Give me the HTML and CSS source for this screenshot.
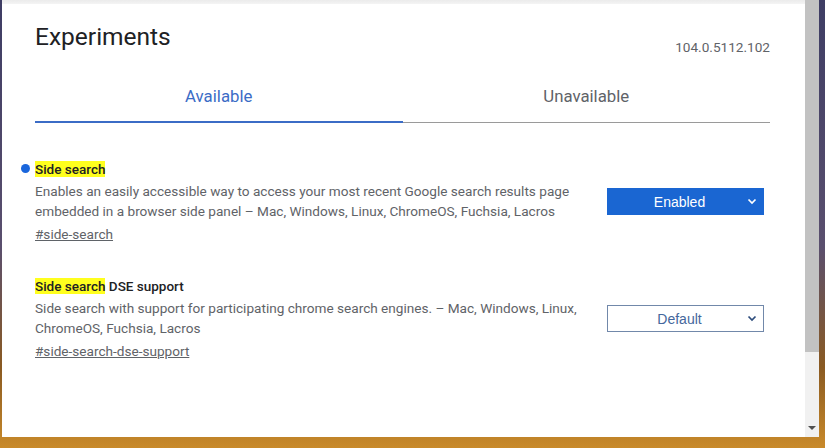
FILE: index.html
```html
<!DOCTYPE html>
<html lang="en">
<head>
    <meta charset="UTF-8">
    <meta name="viewport" content="width=device-width, initial-scale=1.0">
    <title>Experiments</title>
    <link rel="stylesheet" href="styles.css">
</head>
<body>
    <div class="window">
        <main class="page">
            <div class="topbar"></div>
            <div class="content">
                <header class="header">
                    <h1>Experiments</h1>
                    <span class="version">104.0.5112.102</span>
                </header>

                <nav class="tabs">
                    <div class="tab active">Available</div>
                    <div class="tab">Unavailable</div>
                </nav>

                <section class="experiments">
                    <div class="experiment">
                        <div class="experiment-text">
                            <h2 class="experiment-name"><span class="dot"></span><mark>Side search</mark></h2>
                            <p class="experiment-desc">Enables an easily accessible way to access your most recent Google search results page embedded in a browser side panel – Mac, Windows, Linux, ChromeOS, Fuchsia, Lacros</p>
                            <a class="permalink" href="#side-search">#side-search</a>
                        </div>
                        <div class="select enabled">
                            <span>Enabled</span>
                            <svg width="10" height="7" viewBox="0 0 10 7"><path d="M1.5 1.5 L5 5 L8.5 1.5" fill="none" stroke="#fff" stroke-width="1.7"/></svg>
                        </div>
                    </div>

                    <div class="experiment">
                        <div class="experiment-text">
                            <h2 class="experiment-name"><mark>Side search</mark> DSE support</h2>
                            <p class="experiment-desc">Side search with support for participating chrome search engines. – Mac, Windows, Linux, ChromeOS, Fuchsia, Lacros</p>
                            <a class="permalink" href="#side-search-dse-support">#side-search-dse-support</a>
                        </div>
                        <div class="select">
                            <span>Default</span>
                            <svg width="10" height="7" viewBox="0 0 10 7"><path d="M1.5 1.5 L5 5 L8.5 1.5" fill="none" stroke="#2d4c7c" stroke-width="1.7"/></svg>
                        </div>
                    </div>
                </section>
            </div>
        </main>

        <div class="scrollbar">
            <div class="thumb"></div>
            <div class="track"><span class="arrow"></span></div>
        </div>
    </div>
</body>
</html>
```

FILE: styles.css
```css
body {
    margin: 0;
    height: 448px;
    overflow: hidden;
    font-family: Roboto, "Liberation Sans", sans-serif;
    background: linear-gradient(to bottom, #3e3d64 0%, #5a4f6e 55%, #8a5a22 82%, #c98a2a 100%);
}

.window {
    display: flex;
    width: 817px;
    height: 437px;
    margin-left: 2px;
}

.page {
    flex: 1;
    background-color: #fff;
}

.topbar {
    height: 4px;
    background: linear-gradient(to bottom, #ebebeb, #f4f4f4);
}

.content {
    padding: 0 35px 0 33px;
}

.header {
    display: flex;
    justify-content: space-between;
    align-items: flex-start;
}

h1 {
    margin: 19px 0 0;
    font-size: 24.5px;
    line-height: 28px;
    font-weight: 400;
    color: #202124;
}

.version {
    margin-top: 35px;
    font-size: 13.6px;
    line-height: 16px;
    color: #5f6368;
}

.tabs {
    display: flex;
    margin-top: 17px;
}

.tab {
    flex: 1;
    text-align: center;
    padding: 14px 0 15px;
    font-size: 16.8px;
    line-height: 20px;
    color: #5f6368;
    border-bottom: 1px solid #9a9a9a;
}

.tab.active {
    color: #3b6cc6;
    border-bottom: 2px solid #3b6cc6;
}

.experiments {
    display: flex;
    flex-direction: column;
    gap: 32px;
    padding-top: 36px;
}

.experiment {
    display: flex;
    align-items: center;
}

.experiment-text {
    flex: 1;
    padding-right: 22px;
}

.experiment-name {
    position: relative;
    margin: 0;
    font-size: 13.5px;
    line-height: 20px;
    font-weight: 500;
    color: #202124;
}

.experiment-name mark {
    background-color: #ffff1e;
    color: #202124;
}

.dot {
    position: absolute;
    left: -14px;
    top: 5px;
    width: 9px;
    height: 9px;
    border-radius: 50%;
    background-color: #1a66dc;
}

.experiment-desc {
    margin: 2px 0 0;
    font-size: 13.6px;
    line-height: 20px;
    color: #5f6368;
}

.permalink {
    display: inline-block;
    margin-top: 3px;
    font-size: 13.6px;
    line-height: 20px;
    color: #5f6368;
}

.select {
    display: flex;
    align-items: center;
    justify-content: space-between;
    box-sizing: border-box;
    width: 157px;
    height: 27px;
    margin-right: 6px;
    padding: 0 6px 0 4px;
    border: 1px solid #7188aa;
    background-color: #fff;
    font-family: "Liberation Sans", Arial, sans-serif;
    font-size: 14px;
    color: #45679c;
}

.select span {
    flex: 1;
    text-align: center;
}

.select.enabled {
    border-color: #1a66d2;
    background-color: #1a66d2;
    color: #fff;
}

.scrollbar {
    display: flex;
    flex-direction: column;
    width: 14px;
}

.thumb {
    height: 352px;
    background-color: #c2c2c2;
}

.track {
    flex: 1;
    display: flex;
    align-items: flex-end;
    justify-content: center;
    padding-bottom: 7px;
    background-color: #f1f1f1;
}

.arrow {
    width: 0;
    height: 0;
    border-left: 4px solid transparent;
    border-right: 4px solid transparent;
    border-top: 4px solid #505050;
}
```
